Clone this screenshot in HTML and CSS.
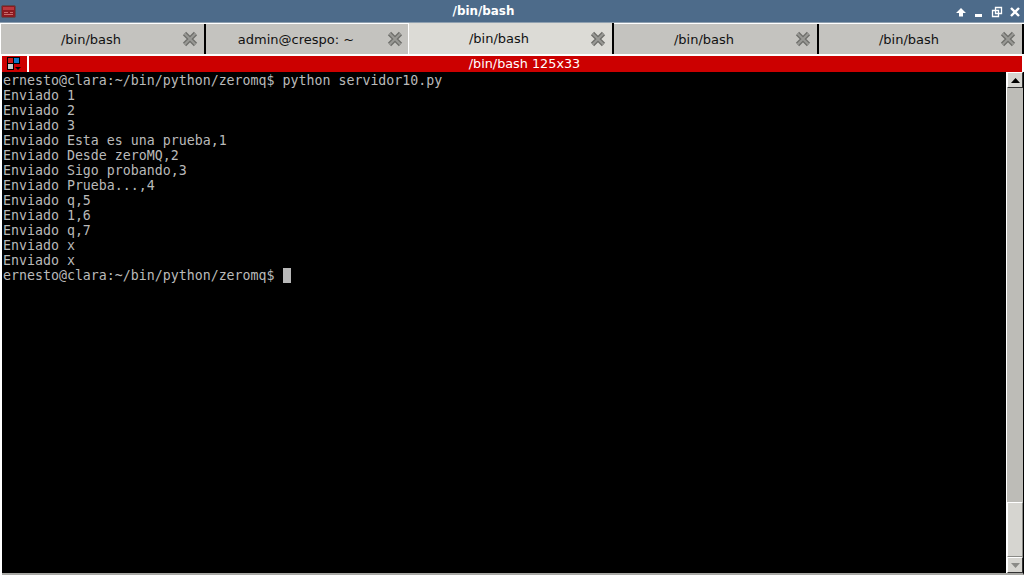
FILE: index.html
```html
<!DOCTYPE html>
<html lang="es">
<head>
<meta charset="utf-8">
<title>/bin/bash</title>
<link rel="stylesheet" href="styles.css">
</head>
<body>
<div class="window">
  <header class="titlebar">
    <svg class="app-icon" width="15" height="13" viewBox="0 0 15 13"><rect x="0.500" y="0.500" width="14" height="12" rx="1.500" fill="#8c1a20" stroke="#5a4a50"/><rect x="2" y="2" width="11" height="3" fill="#b8383e"/><path d="M3 7.500h4M9 7.500h3M3 9.500h9" stroke="#c86c6c"/></svg>
    <span class="title">/bin/bash</span>
    <div class="controls">
      <svg width="12" height="12" viewBox="0 0 12 12"><path d="M6 2 11 7H8v3.500H4V7H1z" fill="#fff"/></svg>
      <svg width="12" height="12" viewBox="0 0 12 12"><rect x="2" y="8" width="7" height="3" fill="#fff"/></svg>
      <svg width="12" height="12" viewBox="0 0 12 12"><path d="M4.500 1.500h6v6h-6zM1.500 4.500h6v6h-6z" fill="none" stroke="#fff" stroke-width="1.300"/></svg>
      <svg width="12" height="12" viewBox="0 0 12 12"><path d="M2 2 10 10M10 2 2 10" stroke="#fff" stroke-width="2.400"/></svg>
    </div>
  </header>
  <nav class="tabs">
    <div class="tab"><span class="tab-label">/bin/bash</span><svg class="close" width="16" height="16" viewBox="0 0 16 16"><path d="M2.500 2.500 13.500 13.500M13.500 2.500 2.500 13.500" stroke="#6f6f6c" stroke-width="4.600"/><path d="M2.500 2.500 13.500 13.500M13.500 2.500 2.500 13.500" stroke="#999995" stroke-width="2"/></svg></div>
    <div class="tab before-active"><span class="tab-label">admin@crespo: ~</span><svg class="close" width="16" height="16" viewBox="0 0 16 16"><path d="M2.500 2.500 13.500 13.500M13.500 2.500 2.500 13.500" stroke="#6f6f6c" stroke-width="4.600"/><path d="M2.500 2.500 13.500 13.500M13.500 2.500 2.500 13.500" stroke="#999995" stroke-width="2"/></svg></div>
    <div class="tab active"><span class="tab-label">/bin/bash</span><svg class="close" width="16" height="16" viewBox="0 0 16 16"><path d="M2.500 2.500 13.500 13.500M13.500 2.500 2.500 13.500" stroke="#6f6f6c" stroke-width="4.600"/><path d="M2.500 2.500 13.500 13.500M13.500 2.500 2.500 13.500" stroke="#999995" stroke-width="2"/></svg></div>
    <div class="tab"><span class="tab-label">/bin/bash</span><svg class="close" width="16" height="16" viewBox="0 0 16 16"><path d="M2.500 2.500 13.500 13.500M13.500 2.500 2.500 13.500" stroke="#6f6f6c" stroke-width="4.600"/><path d="M2.500 2.500 13.500 13.500M13.500 2.500 2.500 13.500" stroke="#999995" stroke-width="2"/></svg></div>
    <div class="tab"><span class="tab-label">/bin/bash</span><svg class="close" width="16" height="16" viewBox="0 0 16 16"><path d="M2.500 2.500 13.500 13.500M13.500 2.500 2.500 13.500" stroke="#6f6f6c" stroke-width="4.600"/><path d="M2.500 2.500 13.500 13.500M13.500 2.500 2.500 13.500" stroke="#999995" stroke-width="2"/></svg></div>
  </nav>
  <div class="termbar">
    <div class="termicon">
      <svg width="15" height="15" viewBox="0 0 15 15"><rect x="0.500" y="0.500" width="6" height="6" fill="#d01818" stroke="#000"/><rect x="6.500" y="0.500" width="6" height="6" fill="#0a78c8" stroke="#000"/><rect x="0.500" y="6.500" width="6" height="6" fill="#c8c8c8" stroke="#000"/><path d="M8 10h6l-3 3z" fill="#000"/></svg>
    </div>
    <div class="termtitle">/bin/bash 125x33</div>
  </div>
  <main class="body">
    <pre class="terminal">ernesto@clara:~/bin/python/zeromq$ python servidor10.py
Enviado 1
Enviado 2
Enviado 3
Enviado Esta es una prueba,1
Enviado Desde zeroMQ,2
Enviado Sigo probando,3
Enviado Prueba...,4
Enviado q,5
Enviado 1,6
Enviado q,7
Enviado x
Enviado x
ernesto@clara:~/bin/python/zeromq$ <span class="cursor"> </span></pre>
    <div class="scrollbar">
      <div class="sb-btn"><svg width="9" height="5" viewBox="0 0 9 5"><path d="M4.500 0 9 5H0z" fill="#000"/></svg></div>
      <div class="sb-track"></div>
      <div class="sb-thumb"></div>
      <div class="sb-btn"><svg width="9" height="5" viewBox="0 0 9 5"><path d="M0 0h9L4.500 5z" fill="#8a8a86"/></svg></div>
    </div>
  </main>
</div>
</body>
</html>
```

FILE: styles.css
```css
html, body { margin: 0; padding: 0; background: #000; }
.window { width: 1024px; height: 575px; display: flex; flex-direction: column; overflow: hidden; background: #fff; font-family: "DejaVu Sans", sans-serif; }
.titlebar { height: 22px; flex: none; display: flex; align-items: center; background: #4d6b8a; border-bottom: 1px solid #8fa0b0; color: #fff; }
.app-icon { margin-left: 1px; }
.title { flex: 1; text-align: center; font-size: 11.900px; font-weight: bold; margin-left: -4px; }
.controls { display: flex; gap: 6px; margin-right: 3px; margin-top: 1px; }
.tabs { height: 30px; flex: none; display: flex; background: #fff; padding: 1px 0 0 1px; }
.tab { flex: 1; display: flex; align-items: center; background: #c4c3bf; border-right: 2px solid #000; font-size: 13px; color: #111; }
.tab.before-active { border-right: none; }
.tab.active { background: #dcdbd6; margin-top: -1px; margin-left: -1px; border-left: 1px solid #fff; }
.tab-label { flex: 1; text-align: center; }
.close { margin-right: 6px; margin-left: 1px; }
.termbar { height: 16px; flex: none; display: flex; margin-top: 2px; margin-left: 2px; background: #fff; }
.termicon { width: 24px; padding-right: 1px; display: flex; align-items: center; justify-content: center; background: #cc0000; border-right: 2px solid #fff; }
.termtitle { flex: 1; background: #cc0000; color: #fff; text-align: center; font-size: 12.800px; line-height: 16px; margin-right: 2px; padding-right: 2px; }
.body { flex: 1; display: flex; min-height: 0; margin-left: 2px; background: #000; border-bottom: 2px solid #a8a8a4; border-right: 1px solid #000; }
.terminal { flex: 1; margin: 0; padding: 1px 0 0 1px; background: #000; color: #bababa; font-family: "DejaVu Sans Mono", monospace; font-size: 13.280px; line-height: 15px; }
.cursor { background: #b8b8b8; }
.scrollbar { width: 16px; display: flex; flex-direction: column; background: #bdbcb7; border-left: 1px solid #fff; }
.sb-btn { height: 16px; flex: none; display: flex; align-items: center; justify-content: center; background: #d6d5d0; border: 1px solid; border-color: #fff #333 #333 #fff; box-sizing: border-box; }
.sb-track { flex: 1; background: #bdbcb7; }
.sb-thumb { height: 55px; flex: none; background: #d6d5d0; border: 1px solid; border-color: #fff #8a8a86 #8a8a86 #fff; box-sizing: border-box; }
```
